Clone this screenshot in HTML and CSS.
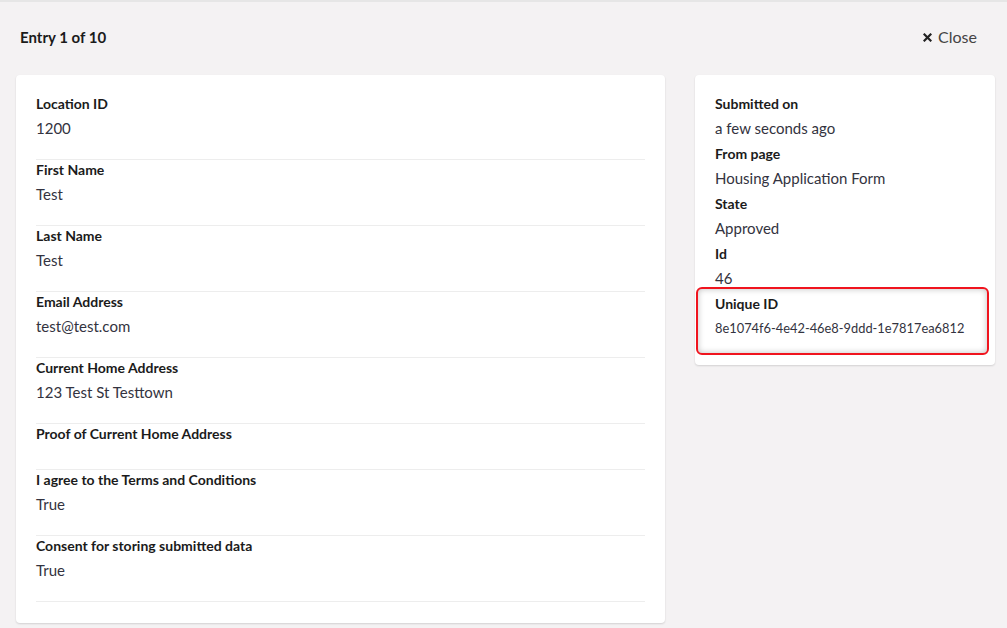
FILE: index.html
```html
<!DOCTYPE html>
<html lang="en">
<head>
<meta charset="utf-8">
<title>Entry 1 of 10</title>
<link rel="stylesheet" href="styles.css">
</head>
<body>
<div class="page">
  <header class="header">
    <h1 class="title">Entry 1 of 10</h1>
    <button class="close" type="button">
      <svg class="close-icon" width="9" height="9" viewBox="0 0 9 9" aria-hidden="true"><path d="M1.5 1.5 L7.5 7.5 M7.5 1.5 L1.5 7.5" stroke="#222" stroke-width="2.2" stroke-linecap="square"/></svg>
      <span>Close</span>
    </button>
  </header>
  <main class="main">
    <section class="card fields">
      <div class="field"><div class="label">Location ID</div><div class="value">1200</div></div>
      <div class="field"><div class="label">First Name</div><div class="value">Test</div></div>
      <div class="field"><div class="label">Last Name</div><div class="value">Test</div></div>
      <div class="field"><div class="label">Email Address</div><div class="value">test@test.com</div></div>
      <div class="field"><div class="label">Current Home Address</div><div class="value">123 Test St Testtown</div></div>
      <div class="field"><div class="label">Proof of Current Home Address</div><div class="value"></div></div>
      <div class="field"><div class="label">I agree to the Terms and Conditions</div><div class="value">True</div></div>
      <div class="field"><div class="label">Consent for storing submitted data</div><div class="value">True</div></div>
    </section>
    <aside class="card meta">
      <div class="meta-label">Submitted on</div>
      <div class="meta-value">a few seconds ago</div>
      <div class="meta-label">From page</div>
      <div class="meta-value">Housing Application Form</div>
      <div class="meta-label">State</div>
      <div class="meta-value">Approved</div>
      <div class="meta-label">Id</div>
      <div class="meta-value">46</div>
      <div class="highlight">
        <div class="meta-label">Unique ID</div>
        <div class="meta-value small">8e1074f6-4e42-46e8-9ddd-1e7817ea6812</div>
      </div>
    </aside>
  </main>
</div>
</body>
</html>
```

FILE: styles.css
```css
html, body {
  margin: 0;
  padding: 0;
}
body {
  background: #f4f2f3;
  font-family: Lato, "Open Sans", Arial, sans-serif;
  color: #1b1b1b;
  height: 628px;
  overflow: hidden;
}
.page {
  border-top: 2px solid #e6e6e6;
}
.header {
  display: flex;
  align-items: center;
  justify-content: space-between;
  height: 73px;
  padding: 0 30px 4px 20px;
  box-sizing: border-box;
}
.title {
  margin: 0;
  font-size: 15px;
  font-weight: 700;
  color: #1b1b1b;
  line-height: 20px;
}
.close {
  display: flex;
  align-items: center;
  gap: 6px;
  border: 0;
  background: none;
  padding: 0;
  font-family: inherit;
  font-size: 16px;
  color: #444;
  cursor: pointer;
}
.close-icon {
  display: block;
  margin-top: 2px;
}
.main {
  display: flex;
  align-items: flex-start;
  gap: 30px;
  padding: 0 12px 0 16px;
}
.card {
  background: #fff;
  border-radius: 4px;
  box-shadow: 0 1px 2px rgba(0, 0, 0, 0.14);
  box-sizing: border-box;
}
.fields {
  width: 649px;
  padding: 19px 20px 21px;
}
.field {
  padding-bottom: 21px;
  border-top: 1px solid #ededed;
}
.field:first-child {
  border-top: 0;
}
.field:last-child {
  border-bottom: 1px solid #ededed;
}
.label {
  font-size: 14px;
  font-weight: 700;
  line-height: 20px;
  color: #1b1b1b;
}
.value {
  margin-top: 4px;
  font-size: 15px;
  line-height: 20px;
  color: #333340;
}
.meta {
  width: 300px;
  padding: 16px 20px 24px;
}
.meta-label {
  font-size: 14px;
  font-weight: 700;
  line-height: 25px;
  color: #1b1b1b;
}
.meta-value {
  font-size: 15px;
  line-height: 25px;
  color: #333340;
}
.meta-value.small {
  font-size: 12.85px;
}
.highlight {
  position: relative;
}
.highlight::after {
  content: "";
  position: absolute;
  left: -19px;
  right: -14px;
  top: -4px;
  bottom: -14px;
  border: 2px solid #f0141e;
  border-radius: 6px;
  box-shadow: inset 0 0 6px rgba(0, 0, 0, 0.25);
  pointer-events: none;
}
```
